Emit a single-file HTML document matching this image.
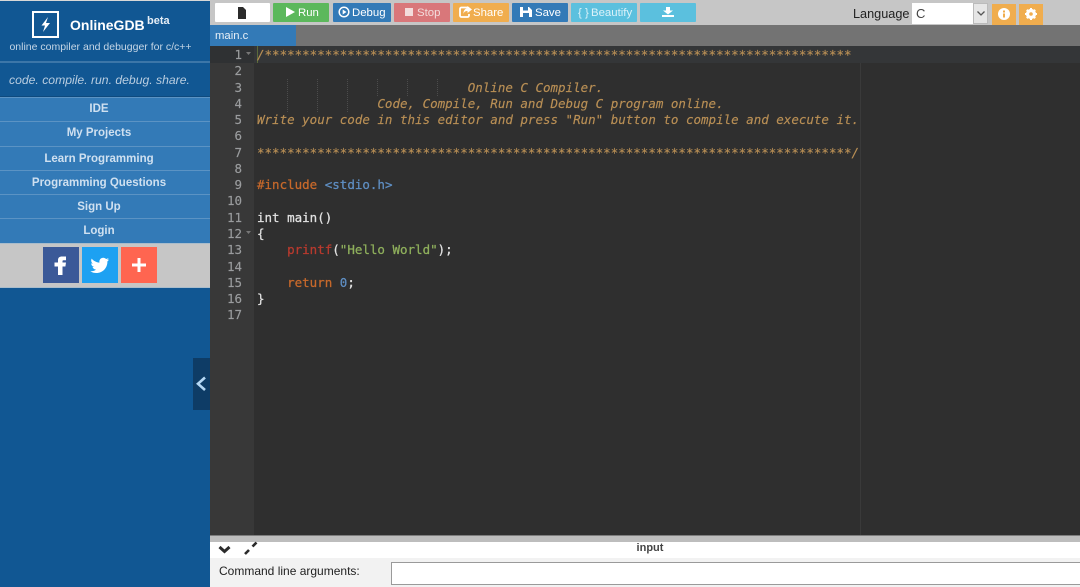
<!DOCTYPE html>
<html><head><meta charset="utf-8"><style>
html,body{margin:0;padding:0;width:1080px;height:587px;overflow:hidden;background:#fff;font-family:"Liberation Sans",sans-serif}
div,span,svg{position:absolute;box-sizing:border-box}
span.c,b,i{position:static}
.nav{left:0;width:210px;height:24px;background:#337ab7;border-top:1px solid #5b93c4;color:#cfe0f0;font-size:11.500px;font-weight:bold;text-align:center;line-height:22px;padding-right:12px}
.btn{top:3px;height:19px;color:#fff;font-size:11.400px;line-height:19px;white-space:nowrap;border-radius:1px}
.btn svg{top:3px}
.btn span.t{position:absolute;top:1px}
.soc{top:247px;width:36px;height:36px}
.ln{left:210px;width:32px;text-align:right;color:#9a9c9e;font:12.500px/16.270px "DejaVu Sans Mono",monospace;height:17px;-webkit-text-stroke:.15px #9a9c9e}
.cl{left:257px;font:12.500px/16.270px "DejaVu Sans Mono",monospace;white-space:pre;color:#e2e2e2;height:17px;-webkit-text-stroke:.25px}
.cm{color:#b98f55;font-style:italic;-webkit-text-stroke:.15px #b98f55}
.g{width:0;border-left:1px dotted #4c4c4c}
</style></head><body>
<!-- top strip -->
<div style="left:210px;top:0;width:870px;height:25px;background:#c6c6c6"></div>
<div style="left:210px;top:25px;width:870px;height:21px;background:#737373"></div>
<!-- sidebar -->
<div style="left:0;top:0;width:210px;height:587px;background:#115793"></div>
<div style="left:0;top:0;width:210px;height:1px;background:#d8d8d8"></div>
<div style="left:32px;top:11px;width:27px;height:27px;border:2px solid #fff"></div>
<svg style="left:32px;top:11px" width="27" height="27" viewBox="0 0 27 27"><path d="M16 6L9.500 14.500H13L11 21L18 12H14Z" fill="#fff"/></svg>
<div style="left:70px;top:15px;color:#fff;font-size:14px;font-weight:bold;white-space:nowrap;line-height:20px">OnlineGDB</div>
<div style="left:147px;top:14px;color:#e6eef6;font-size:11px;font-weight:bold;white-space:nowrap;line-height:14px">beta</div>
<div style="left:0;top:40px;width:201px;text-align:center;color:#c5d6e6;font-size:10.500px;line-height:14px;white-space:nowrap">online compiler and debugger for c/c++</div>
<div style="left:0;top:61px;width:210px;height:2px;background:#3c76a8"></div>
<div style="left:9px;top:72px;color:#b9cde0;font-size:12.200px;font-style:italic;line-height:16px;white-space:nowrap">code. compile. run. debug. share.</div>
<div style="left:0;top:96px;width:210px;height:1px;background:#0e4a7e"></div>
<div class="nav" style="top:97px;height:24px">IDE</div>
<div class="nav" style="top:121px;height:25px;line-height:23px">My Projects</div>
<div class="nav" style="top:146px;height:24px;line-height:24px">Learn Programming</div>
<div class="nav" style="top:170px;height:24px;line-height:24px">Programming Questions</div>
<div class="nav" style="top:194px;height:25px;line-height:24px">Sign Up</div>
<div class="nav" style="top:218px;height:25px;line-height:24px">Login</div>
<div style="left:0;top:243px;width:210px;height:45px;background:#c6c6c6;border-top:1px solid #a9bccb;border-bottom:1px solid #a9bccb"></div>
<div class="soc" style="left:43px;background:#3b5998"><svg style="left:0;top:0" width="36" height="36" viewBox="0 0 36 36"><path d="M15 28V19.500H11.500V15.500H15V13C15 10.800 16.500 9.500 19 9.500H23V13.200H20.500C19.800 13.200 19.500 13.600 19.500 14.300V15.500H23L22.400 19.500H19.500V28Z" fill="#fff"/></svg></div>
<div class="soc" style="left:82px;background:#1da1f2"><svg style="left:0;top:0" width="36" height="36" viewBox="0 0 36 36"><g transform="translate(1.800 1.900) scale(.9)"><path d="M28 11.800c-.8.400-1.600.600-2.400.700.900-.500 1.500-1.300 1.800-2.300-.8.500-1.700.800-2.600 1-1.700-1.800-4.400-1.900-6.200-.2-1.100 1.100-1.600 2.700-1.200 4.200-3.400-.2-6.500-1.800-8.600-4.400-1.100 1.900-.6 4.400 1.300 5.600-.7 0-1.300-.2-1.900-.5 0 2 1.400 3.700 3.400 4.100-.6.200-1.300.200-1.900.100.600 1.700 2.100 2.800 3.900 2.900-1.800 1.400-4.100 2-6.400 1.800 2 1.300 4.200 2 6.600 2 8 0 12.400-6.600 12.400-12.300v-.6c.8-.6 1.500-1.300 1.800-2.100z" fill="#fff"/></g></svg></div>
<div class="soc" style="left:121px;background:#ff6550"><svg style="left:0;top:0" width="36" height="36" viewBox="0 0 36 36"><path d="M16.500 11H19.500V16.500H25V19.500H19.500V25H16.500V19.500H11V16.500H16.500Z" fill="#fff"/></svg></div>
<div style="left:193px;top:358px;width:17px;height:52px;background:#0e3c66"></div>
<svg style="left:193px;top:358px" width="17" height="52" viewBox="0 0 17 52"><path d="M12 19.500L5 25.800L12 32" fill="none" stroke="#b5d8f5" stroke-width="2.600"/></svg>

<!-- toolbar -->
<div class="btn" style="left:215px;width:55px;background:#fff"><svg style="left:22px;top:4px" width="10" height="12" viewBox="0 0 10 12"><path d="M1 0H6L9 3V12H1Z" fill="#2b2b2b"/></svg></div>
<div class="btn" style="left:273px;width:56px;background:#5cb85c"><svg style="left:12px;top:3px" width="11" height="12" viewBox="0 0 11 12"><path d="M1 1L10 6L1 11Z" fill="#fff"/></svg><span class="t" style="left:25px">Run</span></div>
<div class="btn" style="left:333px;width:58px;background:#337ab7"><svg style="left:5px;top:3px" width="12" height="12" viewBox="0 0 12 12"><circle cx="6" cy="6" r="4.800" fill="none" stroke="#fff" stroke-width="1.500"/><path d="M4.700 3.500L8.500 6L4.700 8.500Z" fill="#fff"/></svg><span class="t" style="left:19px">Debug</span></div>
<div class="btn" style="left:394px;width:56px;background:#d9777a"><svg style="left:10px" width="10" height="12" viewBox="0 0 10 12"><rect x="1" y="2" width="8" height="8" fill="#f3dcdc"/></svg><span class="t" style="left:23px;color:#f3dcdc">Stop</span></div>
<div class="btn" style="left:453px;width:56px;background:#f0ad4e"><svg style="left:6px" width="13" height="12" viewBox="0 0 13 12"><path d="M9 1.500H2.500A1.500 1.500 0 0 0 1 3V9.500A1.500 1.500 0 0 0 2.500 11H8.500A1.500 1.500 0 0 0 10 9.500V8" fill="none" stroke="#fff" stroke-width="1.800"/><path d="M8.500 0L13 3.500L8.500 7V5C6 5 5 6 4.500 8C4.300 4.500 6 2.500 8.500 2.300Z" fill="#fff"/></svg><span class="t" style="left:20px">Share</span></div>
<div class="btn" style="left:512px;width:56px;background:#337ab7"><svg style="left:8px" width="12" height="12" viewBox="0 0 12 12"><path d="M0 1H9L12 4V11H0ZM3 1V4.500H8V1ZM3 7V11H9V7Z" fill="#fff" fill-rule="evenodd"/></svg><span class="t" style="left:23px">Save</span></div>
<div class="btn" style="left:571px;width:66px;background:#5bc0de;color:#dcf2f9"><span class="t" style="left:7px">{ }</span><span class="t" style="left:20px">Beautify</span></div>
<div class="btn" style="left:640px;width:56px;background:#5bc0de"><svg style="left:22px;top:4px" width="12" height="10" viewBox="0 0 12 10"><path d="M4 0H8V3.500H11L6 7.500L1 3.500H4ZM0 8H12V10H0Z" fill="#fff"/></svg></div>
<div style="left:853px;top:5px;font-size:12.700px;line-height:18px;color:#222">Language</div>
<div style="left:912px;top:3px;width:76px;height:21px;background:#fff"></div>
<div style="left:916px;top:5px;font-size:13px;line-height:17px;color:#444">C</div>
<div style="left:973px;top:3px;width:15px;height:21px;background:#e6e6e6;border:1px solid #bbb"></div>
<svg style="left:976px;top:10px" width="10" height="7" viewBox="0 0 10 7"><path d="M1.500 1.500L5 5L8.500 1.500" fill="none" stroke="#555" stroke-width="1.300"/></svg>
<div style="left:992px;top:4px;width:24px;height:21px;background:#f0ad4e"></div>
<svg style="left:992px;top:4px" width="24" height="21" viewBox="0 0 24 21"><circle cx="12" cy="10" r="6" fill="#fff"/><rect x="11" y="6.500" width="2" height="2" fill="#f0ad4e"/><rect x="11" y="9.500" width="2" height="4" fill="#f0ad4e"/></svg>
<div style="left:1019px;top:4px;width:24px;height:21px;background:#f0ad4e"></div>
<svg style="left:1019px;top:4px" width="24" height="21" viewBox="0 0 24 21"><circle cx="12" cy="10" r="3.800" fill="none" stroke="#fff" stroke-width="2.600"/><path d="M12 4V16M6 10H18M7.800 5.800L16.200 14.200M16.200 5.800L7.800 14.200" stroke="#fff" stroke-width="2"/><circle cx="12" cy="10" r="1.800" fill="#f0ad4e"/></svg>
<!-- tab -->
<div style="left:210px;top:25px;width:86px;height:21px;background:#337ab7;color:#e8f0f7;font-size:11.300px;line-height:22px;padding-left:5px">main.c</div>
<!-- editor -->
<div style="left:210px;top:46px;width:870px;height:490px;background:#2f2f2f"></div>
<div style="left:210px;top:46px;width:44px;height:490px;background:#383838"></div>
<div style="left:254px;top:46px;width:826px;height:17px;background:#343638"></div>
<div style="left:210px;top:46px;width:44px;height:17px;background:#2f3133"></div>
<div style="left:860px;top:63px;width:1px;height:473px;background:#3a3a3a"></div>
<div style="left:257px;top:46px;width:1px;height:17px;background:#5b6b3a"></div>
<div class="g" style="left:287px;top:79px;height:33px"></div><div class="g" style="left:317px;top:79px;height:33px"></div><div class="g" style="left:347px;top:79px;height:33px"></div><div class="g" style="left:377px;top:79px;height:17px"></div><div class="g" style="left:407px;top:79px;height:17px"></div><div class="g" style="left:437px;top:79px;height:17px"></div>
<svg style="left:246px;top:52px" width="6" height="4"><path d="M0 0H5L2.500 3Z" fill="#777"/></svg>
<svg style="left:246px;top:231px" width="6" height="4"><path d="M0 0H5L2.500 3Z" fill="#777"/></svg>
<div style="left:0;top:1px;width:1080px;height:400px">
<div class="ln" style="top:46px">1</div><div class="ln" style="top:62.300px">2</div><div class="ln" style="top:78.500px">3</div><div class="ln" style="top:94.800px">4</div><div class="ln" style="top:111.100px">5</div><div class="ln" style="top:127.400px">6</div><div class="ln" style="top:143.600px">7</div><div class="ln" style="top:159.900px">8</div><div class="ln" style="top:176.200px">9</div><div class="ln" style="top:192.400px">10</div><div class="ln" style="top:208.700px">11</div><div class="ln" style="top:225px">12</div><div class="ln" style="top:241.200px">13</div><div class="ln" style="top:257.500px">14</div><div class="ln" style="top:273.800px">15</div><div class="ln" style="top:290px">16</div><div class="ln" style="top:306.300px">17</div>
<div class="cl cm" style="top:46px">/******************************************************************************</div>
<div class="cl cm" style="top:78.500px">                            Online C Compiler.</div>
<div class="cl cm" style="top:94.800px">                Code, Compile, Run and Debug C program online.</div>
<div class="cl cm" style="top:111.100px">Write your code in this editor and press "Run" button to compile and execute it.</div>
<div class="cl cm" style="top:143.600px">*******************************************************************************/</div>
<div class="cl" style="top:176.200px"><span class="c" style="color:#c8692b">#include</span> <span class="c" style="color:#5f8fc4">&lt;stdio.h&gt;</span></div>
<div class="cl" style="top:208.700px">int main()</div>
<div class="cl" style="top:225px">{</div>
<div class="cl" style="top:241.200px">    <span class="c" style="color:#b93a2e">printf</span>(<span class="c" style="color:#8fb05c">"Hello World"</span>);</div>
<div class="cl" style="top:273.800px">    <span class="c" style="color:#c8692b">return</span> <span class="c" style="color:#5f8fc4">0</span>;</div>
<div class="cl" style="top:290px">}</div>
</div>
<!-- bottom -->
<div style="left:210px;top:535px;width:870px;height:7px;background:#bdbdbd;border-top:1px solid #7d7d7d"></div>
<div style="left:210px;top:542px;width:870px;height:16px;background:#fff"></div>
<div style="left:210px;top:558px;width:870px;height:29px;background:#f2f2f2"></div>
<svg style="left:218px;top:544px" width="13" height="10" viewBox="0 0 13 10"><path d="M1.500 3L6.500 7.500L11.500 3" fill="none" stroke="#2b2b2b" stroke-width="3"/></svg>
<svg style="left:243px;top:541px" width="15" height="15" viewBox="0 0 15 15"><path d="M2 13L6 9M9.500 5.500L13.500 1.500" fill="none" stroke="#2b2b2b" stroke-width="2.600"/></svg>
<div style="left:210px;top:542px;width:880px;text-align:center;font-size:11px;font-weight:bold;color:#444;line-height:13px">input</div>
<div style="left:219px;top:563px;font-size:12px;line-height:16px;color:#222;white-space:nowrap">Command line arguments:</div>
<div style="left:391px;top:562px;width:700px;height:23px;background:#fff;border:1px solid #9a9a9a"></div>
</body></html>
